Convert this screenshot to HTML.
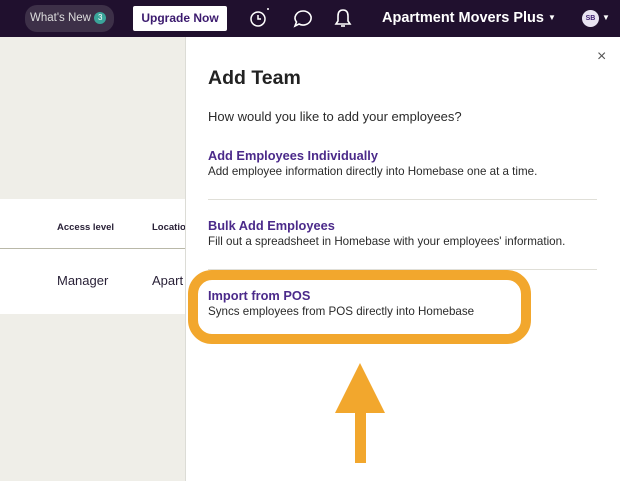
<!DOCTYPE html>
<html><head><meta charset="utf-8"><style>
*{margin:0;padding:0;box-sizing:border-box}
body{width:620px;height:481px;overflow:hidden;position:relative;background:#fff;font-family:"Liberation Sans",sans-serif;color:#222}
.hdr{position:absolute;left:0;top:0;width:620px;height:37px;background:#20102e}
.abs{position:absolute}
.left{position:absolute;left:0;top:37px;width:185px;height:444px;background:#efeee8}
.tbl{position:absolute;left:0;top:199px;width:185px;height:115px;background:#fff}
.panel{position:absolute;left:185px;top:37px;width:435px;height:444px;background:#fff;border-left:1px solid #dcdcd6}
.ttl{font-size:12.8px;font-weight:bold;color:#4b2a8a}
.sub{font-size:11.6px;color:#2a2a2a}
</style></head><body>
<div class="hdr">
  <div class="abs" style="left:25px;top:5px;width:89px;height:27px;border-radius:12px;background:#3d3048;color:#ddd;font-size:11.5px;line-height:27px;padding-left:5px">What's New <span style="display:inline-block;width:12px;height:12px;border-radius:6px;background:#3aa59a;color:#fff;font-size:8px;line-height:12px;text-align:center;vertical-align:1px">3</span></div>
  <div class="abs" style="left:133px;top:6px;width:94px;height:25px;background:#fff;border-radius:2px;color:#3b1a6e;font-size:12px;font-weight:bold;text-align:center;line-height:25px">Upgrade Now</div>
  <svg class="abs" style="left:246px;top:6px" width="26" height="24" viewBox="0 0 26 24" fill="none" stroke="#fff" stroke-width="1.5"><circle cx="12" cy="13" r="7"/><path d="M12 9v4h3"/><circle cx="22" cy="3" r="1" fill="#fff" stroke="none"/></svg>
  <svg class="abs" style="left:292px;top:8px" width="22" height="22" viewBox="0 0 22 22" fill="none" stroke="#fff" stroke-width="1.6"><path d="M11 3a8 7 0 1 1-4 13l-4 2 1.5-4A8 7 0 0 1 11 3z"/></svg>
  <svg class="abs" style="left:333px;top:7px" width="20" height="22" viewBox="0 0 20 22" fill="none" stroke="#fff" stroke-width="1.6"><path d="M10 3c-3.5 0-5 2.5-5 6v5l-2 3h14l-2-3V9c0-3.5-1.5-6-5-6z"/><path d="M8 19h4"/></svg>
  <div class="abs" style="left:382px;top:10px;color:#fff;font-size:14.5px;font-weight:bold">Apartment Movers Plus <span style="font-size:8px;vertical-align:2px">▼</span></div>
  <div class="abs" style="left:582px;top:10px;width:17px;height:17px;border-radius:9px;background:#e9e4f2;color:#3b1a6e;font-size:7px;font-weight:bold;text-align:center;line-height:17px">SB</div>
  <div class="abs" style="left:602px;top:13px;color:#fff;font-size:8px">▼</div>
</div>
<div class="left"></div>
<div class="tbl">
  <div class="abs" style="left:57px;top:23px;font-size:9.5px;font-weight:bold;color:#2a2238">Access level</div>
  <div class="abs" style="left:152px;top:23px;font-size:9.5px;font-weight:bold;color:#2a2238">Locatio</div>
  <div class="abs" style="left:0;top:49px;width:185px;height:1px;background:#b9b8a8"></div>
  <div class="abs" style="left:57px;top:74px;font-size:13px;color:#2a2238">Manager</div>
  <div class="abs" style="left:152px;top:74px;font-size:13px;color:#2a2238">Apart</div>
</div>
<div class="panel"></div>
<div class="abs" style="left:597px;top:48px;font-size:16px;color:#555">×</div>
<div class="abs" style="left:208px;top:67px;font-size:19.5px;font-weight:bold;color:#222">Add Team</div>
<div class="abs sub" style="left:208px;top:109px;font-size:13px">How would you like to add your employees?</div>
<div class="abs ttl" style="left:208px;top:148px">Add Employees Individually</div>
<div class="abs sub" style="left:208px;top:165px">Add employee information directly into Homebase one at a time.</div>
<div class="abs" style="left:208px;top:199px;width:389px;height:1px;background:#e0dfd8"></div>
<div class="abs ttl" style="left:208px;top:218px">Bulk Add Employees</div>
<div class="abs sub" style="left:208px;top:235px">Fill out a spreadsheet in Homebase with your employees' information.</div>
<div class="abs" style="left:208px;top:269px;width:389px;height:1px;background:#e0dfd8"></div>
<div class="abs" style="left:188px;top:270px;width:343px;height:74px;border:10px solid #f2a72d;border-radius:24px"></div>
<div class="abs ttl" style="left:208px;top:288px">Import from POS</div>
<div class="abs sub" style="left:208px;top:305px">Syncs employees from POS directly into Homebase</div>
<svg class="abs" style="left:330px;top:360px" width="60" height="106"><path d="M30 3L55 53H36V103H25V53H5Z" fill="#f2a72d"/></svg>
</body></html>
